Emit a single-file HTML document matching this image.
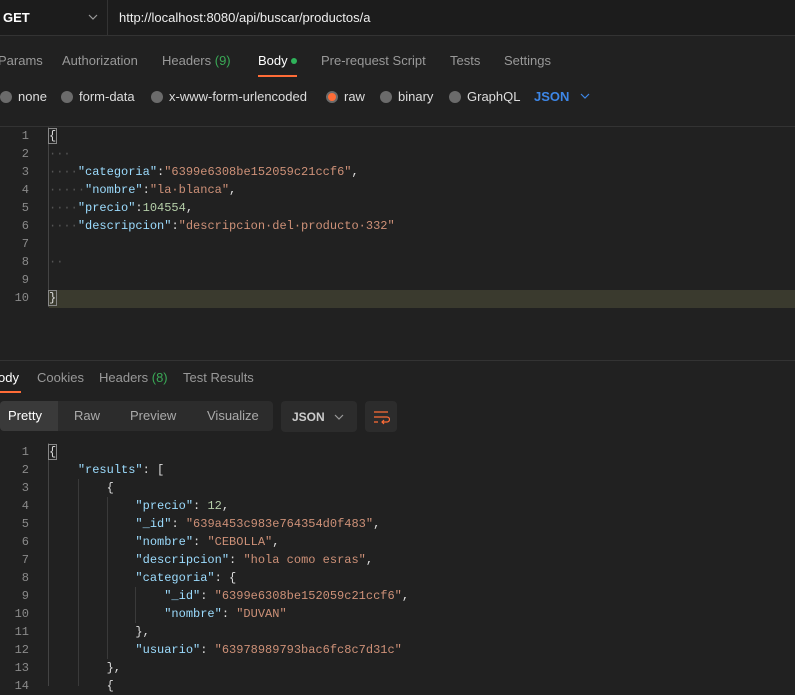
<!DOCTYPE html>
<html><head><meta charset="utf-8"><style>
*{margin:0;padding:0;box-sizing:border-box}
body{width:795px;height:685px;background:#212121;font-family:"Liberation Sans",sans-serif;color:#ccc;position:relative;overflow:hidden}
.a{position:absolute;white-space:pre}
.t{font-size:13px}
.code{font-family:"Liberation Mono",monospace;font-size:12px;line-height:18px}
.ln{position:absolute;left:0;width:29px;text-align:right;color:#8a8a8a;font-family:"Liberation Mono",monospace;font-size:12px;line-height:18px}
.k{color:#9cdcfe}.s{color:#ce9178}.n{color:#b5cea8}.p{color:#ddd}.d{color:#555}
.r{display:inline-block;width:12px;height:12px;border-radius:50%;background:#6b6b6b;vertical-align:-2px;margin-right:6px}
</style></head><body>
<div class="a" style="left:0;top:0;width:795px;height:36px;background:#1c1c1c;border-bottom:1px solid #333"></div>
<div class="a t" style="left:3px;top:10px;color:#fff;font-weight:bold;font-size:13px">GET</div>
<svg class="a" style="left:88px;top:13px" width="10" height="8"><path d="M1 2 L5 6 L9 2" stroke="#999" fill="none" stroke-width="1.2"/></svg>
<div class="a" style="left:107px;top:0;width:1px;height:36px;background:#333"></div>
<div class="a t" style="left:119px;top:10px;color:#eee">http://localhost:8080/api/buscar/productos/a</div>
<div class="a t" style="left:-2px;top:53px;color:#999">Params</div>
<div class="a t" style="left:62px;top:53px;color:#999">Authorization</div>
<div class="a t" style="left:162px;top:53px;color:#999">Headers <span style="color:#3aa856">(9)</span></div>
<div class="a t" style="left:258px;top:53px;color:#fff">Body</div>
<div class="a" style="left:291px;top:58px;width:6px;height:6px;border-radius:50%;background:#2fb35a"></div>
<div class="a" style="left:258px;top:75px;width:39px;height:2px;background:#ff6c37"></div>
<div class="a t" style="left:321px;top:53px;color:#999">Pre-request Script</div>
<div class="a t" style="left:450px;top:53px;color:#999">Tests</div>
<div class="a t" style="left:504px;top:53px;color:#999">Settings</div>
<div class="a t" style="left:0;top:89px;color:#ddd"><span class="r"></span>none</div>
<div class="a t" style="left:61px;top:89px;color:#ddd"><span class="r"></span>form-data</div>
<div class="a t" style="left:151px;top:89px;color:#ddd"><span class="r"></span>x-www-form-urlencoded</div>
<div class="a t" style="left:326px;top:89px;color:#ddd"><span class="r" style="background:#ff6c37;border:2px solid #6b6b6b"></span>raw</div>
<div class="a t" style="left:380px;top:89px;color:#ddd"><span class="r"></span>binary</div>
<div class="a t" style="left:449px;top:89px;color:#ddd"><span class="r"></span>GraphQL</div>
<div class="a t" style="left:534px;top:89px;color:#3d86e6;font-weight:bold">JSON</div>
<svg class="a" style="left:580px;top:92px" width="10" height="8"><path d="M1 2 L5 6 L9 2" stroke="#3d86e6" fill="none" stroke-width="1.2"/></svg>
<div class="a" style="left:0;top:126px;width:795px;height:1px;background:#333"></div>
<div class="a" style="left:48px;top:127px;width:1px;height:180px;background:#444"></div>
<div class="a" style="left:49px;top:290px;width:746px;height:18px;background:#3a3a2e"></div>
<div class="ln" style="top:127px">1<br>2<br>3<br>4<br>5<br>6<br>7<br>8<br>9<br>10</div>
<div class="a code" style="left:49px;top:127px"><span class="p" style="outline:1px solid #888">{</span>
<span class="d">···</span>
<span class="d">····</span><span class="k">"categoria"</span><span class="p">:</span><span class="s">"6399e6308be152059c21ccf6"</span><span class="p">,</span>
<span class="d">····</span><span class="d">·</span><span class="k">"nombre"</span><span class="p">:</span><span class="s">"la·blanca"</span><span class="p">,</span>
<span class="d">····</span><span class="k">"precio"</span><span class="p">:</span><span class="n">104554</span><span class="p">,</span>
<span class="d">····</span><span class="k">"descripcion"</span><span class="p">:</span><span class="s">"descripcion·del·producto·332"</span>

<span class="d">··</span>

<span class="p" style="outline:1px solid #888">}</span></div>
<div class="a" style="left:0;top:360px;width:795px;height:1px;background:#333"></div>
<div class="a t" style="left:-2px;top:370px;color:#fff">ody</div>
<div class="a" style="left:0;top:391px;width:21px;height:2px;background:#ff6c37"></div>
<div class="a t" style="left:37px;top:370px;color:#999">Cookies</div>
<div class="a t" style="left:99px;top:370px;color:#999">Headers <span style="color:#3aa856">(8)</span></div>
<div class="a t" style="left:183px;top:370px;color:#999">Test Results</div>
<div class="a" style="left:0;top:401px;width:273px;height:30px;background:#2c2c2c;border-radius:4px"></div>
<div class="a" style="left:0;top:401px;width:58px;height:30px;background:#3a3a3a;border-radius:4px 0 0 4px"></div>
<div class="a t" style="left:8px;top:408px;color:#fff">Pretty</div>
<div class="a t" style="left:74px;top:408px;color:#aaa">Raw</div>
<div class="a t" style="left:130px;top:408px;color:#aaa">Preview</div>
<div class="a t" style="left:207px;top:408px;color:#aaa">Visualize</div>
<div class="a" style="left:281px;top:401px;width:76px;height:31px;background:#2c2c2c;border-radius:4px"></div>
<div class="a" style="left:292px;top:410px;color:#ccc;font-size:12px;font-weight:bold">JSON</div>
<svg class="a" style="left:334px;top:413px" width="10" height="8"><path d="M1 2 L5 6 L9 2" stroke="#999" fill="none" stroke-width="1.2"/></svg>
<div class="a" style="left:365px;top:401px;width:32px;height:31px;background:#2c2c2c;border-radius:4px"></div>
<svg class="a" style="left:372px;top:409px" width="18" height="16"><path d="M2 3H16M2 8H15a2.5 2.5 0 0 1 0 5H10M12 11L10 13L12 15M2 13H6" stroke="#ff6c37" fill="none" stroke-width="1.2"/></svg>
<div class="a" style="left:48px;top:443px;width:1px;height:243px;background:#444"></div>
<div class="a" style="left:78px;top:479px;width:1px;height:207px;background:#3a3a3a"></div>
<div class="a" style="left:107px;top:497px;width:1px;height:162px;background:#3a3a3a"></div>
<div class="a" style="left:135px;top:587px;width:1px;height:36px;background:#3a3a3a"></div>
<div class="ln" style="top:443px">1<br>2<br>3<br>4<br>5<br>6<br>7<br>8<br>9<br>10<br>11<br>12<br>13<br>14</div>
<div class="a code p" style="left:49px;top:443px"><span style="outline:1px solid #888">{</span>
    <span class="k">"results"</span>: [
        {
            <span class="k">"precio"</span>: <span class="n">12</span>,
            <span class="k">"_id"</span>: <span class="s">"639a453c983e764354d0f483"</span>,
            <span class="k">"nombre"</span>: <span class="s">"CEBOLLA"</span>,
            <span class="k">"descripcion"</span>: <span class="s">"hola como esras"</span>,
            <span class="k">"categoria"</span>: {
                <span class="k">"_id"</span>: <span class="s">"6399e6308be152059c21ccf6"</span>,
                <span class="k">"nombre"</span>: <span class="s">"DUVAN"</span>
            },
            <span class="k">"usuario"</span>: <span class="s">"63978989793bac6fc8c7d31c"</span>
        },
        {</div>
</body></html>
